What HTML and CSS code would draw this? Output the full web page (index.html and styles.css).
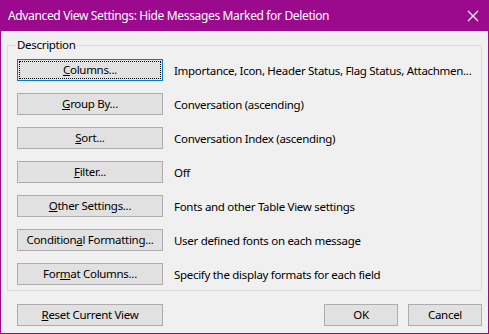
FILE: index.html
```html
<!DOCTYPE html>
<html lang="en">
<head>
  <meta charset="utf-8">
  <title>Advanced View Settings</title>
  <link rel="stylesheet" href="styles.css">
</head>
<body>
  <div class="dialog">
    <div class="titlebar">
      <span class="title">Advanced View Settings: Hide Messages Marked for Deletion</span>
      <svg class="close" width="12" height="12" viewBox="0 0 12 12">
        <path d="M1 1 L11 11 M11 1 L1 11" stroke="#fff" stroke-width="1.2" fill="none"/>
      </svg>
    </div>

    <div class="content">
      <fieldset class="group">
        <legend>Description</legend>
        <div class="rows">
          <div class="row">
            <button class="btn focused"><span class="focus-ring"><u>C</u>olumns...</span></button>
            <span class="desc">Importance, Icon, Header Status, Flag Status, Attachmen...</span>
          </div>
          <div class="row">
            <button class="btn"><u>G</u>roup By...</button>
            <span class="desc">Conversation (ascending)</span>
          </div>
          <div class="row">
            <button class="btn"><u>S</u>ort...</button>
            <span class="desc">Conversation Index (ascending)</span>
          </div>
          <div class="row">
            <button class="btn"><u>F</u>ilter...</button>
            <span class="desc">Off</span>
          </div>
          <div class="row">
            <button class="btn"><u>O</u>ther Settings...</button>
            <span class="desc">Fonts and other Table View settings</span>
          </div>
          <div class="row">
            <button class="btn">Condition<u>a</u>l Formatting...</button>
            <span class="desc">User defined fonts on each message</span>
          </div>
          <div class="row">
            <button class="btn">For<u>m</u>at Columns...</button>
            <span class="desc">Specify the display formats for each field</span>
          </div>
        </div>
      </fieldset>

      <div class="footer">
        <button class="btn"><u>R</u>eset Current View</button>
        <div class="footer-right">
          <button class="btn small">OK</button>
          <button class="btn small">Cancel</button>
        </div>
      </div>
    </div>
  </div>
</body>
</html>
```

FILE: styles.css
```css
body {
  margin: 0;
  padding: 0;
  font-family: "Noto Sans", "Open Sans", sans-serif;
  font-size: 11.5px;
  letter-spacing: -0.3px;
  color: #000;
}

.dialog {
  width: 489px;
  height: 334px;
  box-sizing: border-box;
  border: 1px solid #9b0a8d;
  border-top: none;
  background-color: #f0f0f0;
  display: flex;
  flex-direction: column;
}

.titlebar {
  height: 31px;
  background-color: #9b0a8d;
  display: flex;
  align-items: center;
  justify-content: space-between;
  padding: 0 10px 0 8px;
  margin: 0 -1px;
  flex-shrink: 0;
}

.title {
  color: #fff;
  font-size: 12px;
  letter-spacing: -0.35px;
}

.close {
  display: block;
}

.content {
  padding: 6px 6px 0 6px;
}

.group {
  margin: 0;
  padding: 0 0 5px 9px;
  border: 1px solid #dcdcdc;
  min-width: 0;
}

.group legend {
  padding: 0 1px;
  margin-left: -1px;
  line-height: 16px;
}

.rows {
  display: flex;
  flex-direction: column;
  gap: 12px;
  padding-top: 6px;
}

.row {
  display: flex;
  align-items: center;
  gap: 11px;
}

.btn {
  font-family: inherit;
  font-size: 11.5px;
  letter-spacing: -0.3px;
  color: #000;
  width: 146px;
  height: 22px;
  padding: 0;
  background-color: #e1e1e1;
  border: 1px solid #adadad;
  border-radius: 0;
  line-height: 18px;
  box-sizing: border-box;
  white-space: nowrap;
  flex-shrink: 0;
}

.btn.focused {
  border-color: #0078d7;
  padding: 1px;
}

.focus-ring {
  display: block;
  height: 100%;
  box-sizing: border-box;
  border: 1px dotted #000;
  line-height: 16px;
}

.btn.small {
  width: 74px;
}

.desc {
  white-space: nowrap;
}

.footer {
  display: flex;
  justify-content: space-between;
  padding: 13px 0 0 10px;
}

.footer-right {
  display: flex;
  gap: 10px;
}
```
